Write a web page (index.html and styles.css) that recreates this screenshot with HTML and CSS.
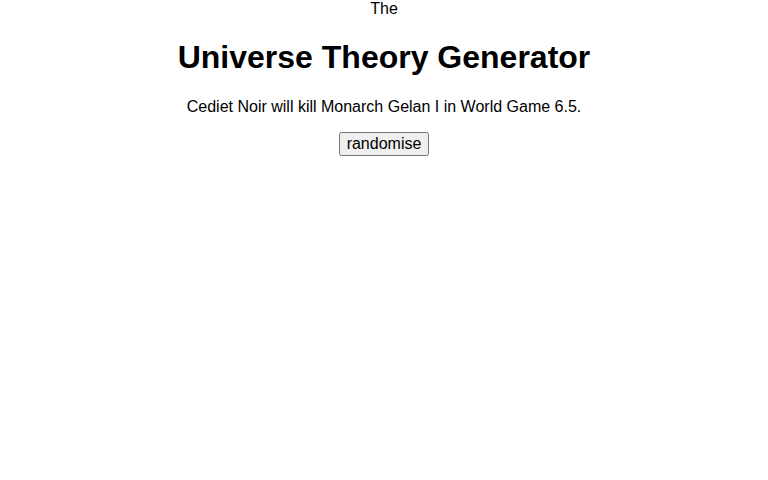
FILE: index.html
```html
<!DOCTYPE html>
<html lang="en">
<head>
<meta charset="utf-8">
<title>Universe Theory Generator</title>
<link rel="stylesheet" href="styles.css">
</head>
<body>
<main class="page">
  <div class="kicker">The</div>
  <h1 class="title">Universe Theory Generator</h1>
  <p class="theory">Cediet Noir will kill Monarch Gelan I in World Game 6.5.</p>
  <button class="randomise" type="button">randomise</button>
</main>
</body>
</html>
```
FILE: styles.css
```css
body {
  margin: 0;
  background: #ffffff;
  color: #000000;
  font-family: "Liberation Sans", Arial, sans-serif;
}

.page {
  text-align: center;
}

.kicker {
  font-size: 16px;
}

.title {
  font-size: 32px;
  font-weight: bold;
  margin: 21.44px 0;
}

.theory {
  font-size: 16px;
  margin: 16px 0;
}

.randomise {
  font-family: "Liberation Sans", Arial, sans-serif;
  font-size: 16px;
}
```
